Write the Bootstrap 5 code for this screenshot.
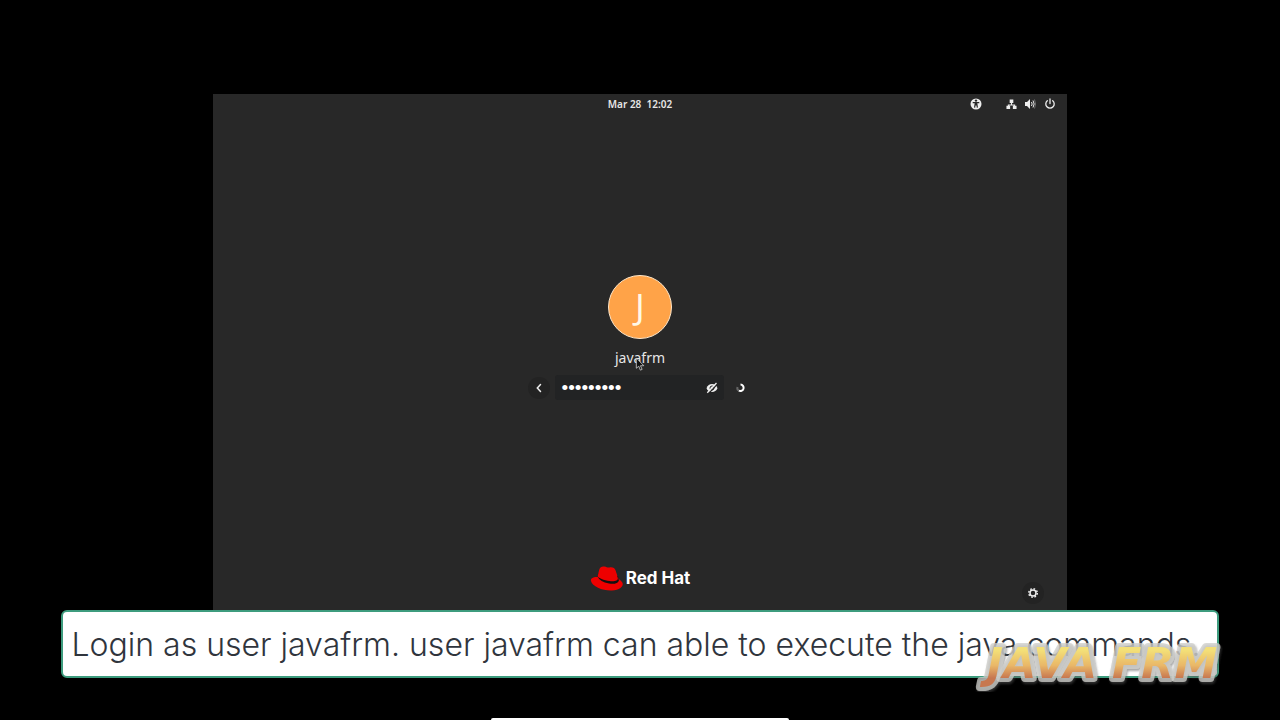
<!DOCTYPE html>
<html lang="en">
<head>
<meta charset="utf-8">
<meta name="viewport" content="width=device-width, initial-scale=1">
<title>Login</title>
<link href="https://cdn.jsdelivr.net/npm/bootstrap@5.3.0/dist/css/bootstrap.min.css" rel="stylesheet">
<style>
  body { background: #000; font-family: "Noto Sans", sans-serif; }
  .stage { min-height: 100vh; padding-top: 94px; }
  .screen { width: 66.66%; background: #282828; color: #e6e6e6; }
  .topbar { height: 20px; font-size: 10px; line-height: 20px; font-weight: 600; padding: 0 11px; }
  .topbar > * { flex: 1 1 0; }
  .topbar time { white-space: pre; }
  .icon-btn { border: 0; padding: 0; background: none; color: #eee; display: flex; align-items: center; justify-content: center; }
  .round-btn { width: 22px; height: 22px; border-radius: 50%; background: #232323; }
  .avatar { width: 64px; height: 64px; border-radius: 50%; background: #ffa348; border: 1px solid #ffe6c8; color: #fff8e6; font-size: 34px; line-height: 60px; }
  .user-name { font-size: 14px; line-height: 20px; margin-top: 9px; margin-bottom: 7px; }
  .login-row { gap: 5px; }
  .pass-box { width: 169px; height: 25px; background: #222324; border-radius: 3px; padding: 0 6px; }
  .pass-box input { min-width: 0; height: 21px; border: 0; outline: 0; padding: 0; background: none; color: #fff; font: 19px "Liberation Sans", sans-serif; }
  .pointer { left: 20px; top: 9px; }
  .shelf { height: 49px; padding: 0 23px 6px; }
  .shelf > * { flex: 1 1 0; }
  .brand-name { font: 700 17px "Inter", sans-serif; line-height: 26px; color: #fff; }
  .caption-box { width: 90.4%; background: #fff; border: 2px solid #3d9c7e; border-radius: 6px; padding: 2px 8px 0; margin-bottom: 40px; font: 300 32px "Inter", sans-serif; line-height: 62px; color: #30353d; }
  .watermark { right: -16px; bottom: -16px; }
  .watermark text { font: italic 700 43px "DejaVu Sans", sans-serif; fill: url(#gold); stroke: rgba(205, 205, 202, .75); stroke-width: 8px; stroke-linejoin: round; paint-order: stroke; }
  .home-bar { width: 298px; height: 2px; background: #fff; border-radius: 3px 3px 0 0; }
</style>
</head>
<body>
<div class="stage d-flex flex-column align-items-center">
  <main class="screen d-flex flex-column flex-grow-1">
    <header class="topbar d-flex align-items-center">
      <span></span>
      <time class="text-center">Mar 28  12:02</time>
      <div class="d-flex justify-content-end align-items-center">
        <button class="icon-btn me-4" aria-label="Accessibility"><svg width="12" height="12" viewBox="0 0 12 12"><circle cx="6" cy="6" r="5.5" fill="currentColor"/><circle cx="6" cy="2.6" r="1.2" fill="#282828"/><path d="M2.7 4.7h6.6M6 4.5v3M4.6 9.6 5.3 5h1.4l.7 4.6" fill="none" stroke="#282828" stroke-width="1.2"/></svg></button>
        <button class="icon-btn me-2" aria-label="Network"><svg width="11" height="12" viewBox="0 0 12 12" fill="currentColor"><path d="M4 1h4v4H6.6v1.500H10V8h1.500v3.500h-4V8h1.300v-.4H3.200V8h1.300v3.500h-4V8H2V6.500h3.400V5H4z"/></svg></button>
        <button class="icon-btn me-2" aria-label="Volume"><svg width="11" height="12" viewBox="0 0 11 12"><path d="M0 4h2l3-3v10L2 8H0z" fill="currentColor"/><path d="M6.500 4q1.300 2 0 4M8 2.500q2.300 3.500 0 7" fill="none" stroke="currentColor"/><path d="M9.500 1.500q2.300 4.500 0 9" fill="none" stroke="#888" stroke-width=".7"/></svg></button>
        <button class="icon-btn" aria-label="Power"><svg width="12" height="12" viewBox="0 0 12 12" fill="none" stroke="currentColor" stroke-width="1.300" stroke-linecap="round"><path d="M3.300 2.700a4.200 4.200 0 1 0 5.400 0M6 1v4.500"/></svg></button>
      </div>
    </header>

    <form class="flex-grow-1 d-flex flex-column align-items-center justify-content-center" onsubmit="return false">
      <div class="avatar text-center">J</div>
      <label for="password" class="user-name position-relative">javafrm
        <svg class="pointer pe-none position-absolute" width="12" height="15" viewBox="0 0 12 16"><path d="M1 1v11l2.600-2.200L5.300 14l1.900-.8-1.800-3.900H9z" fill="#111" stroke="#ddd" stroke-width=".8"/></svg>
      </label>
      <div class="login-row d-flex align-items-center">
        <button type="button" class="icon-btn round-btn" aria-label="Back"><svg width="9" height="12" viewBox="0 0 9 12" fill="none" stroke="currentColor" stroke-width="1.500" stroke-linecap="round"><path d="M5.500 2.500 2.300 6l3.200 3.500"/></svg></button>
        <div class="pass-box d-flex align-items-center">
          <input id="password" type="password" class="flex-grow-1" value="aaaaaaaaa">
          <button type="button" class="icon-btn" aria-label="Show password"><svg width="12" height="12" viewBox="0 0 12 12"><path d="M.5 6.200Q2.200 2 6 2t5.500 4.200Q9.800 10 6 10T.5 6.200z" fill="currentColor"/><circle cx="6" cy="6" r="2" fill="none" stroke="#222" stroke-width="1"/><path d="M2.500 11.500 11.500 2" stroke="#222" stroke-width="1.200"/><path d="M1.300 10.800 10.500 1" stroke="currentColor" stroke-width="1.300"/></svg></button>
        </div>
        <span class="round-btn icon-btn bg-transparent" role="status" aria-label="Signing in"><svg width="12" height="12" viewBox="0 0 12 12" fill="none" stroke-width="2"><path d="M6.500 2.600a3.200 3.200 0 1 1-1.800 5.900" stroke="#fff"/><path d="M4.700 8.500A3 3 0 0 1 3.500 5" stroke="#666"/></svg></span>
      </div>
    </form>

    <footer class="shelf d-flex">
      <span></span>
      <div class="d-flex justify-content-center align-items-start pt-1">
        <svg class="flex-shrink-0" width="36" height="27" viewBox="0 0 36 27"><path d="M7.500 12C2 12 .5 14 1 16c1.300 5.500 12 10 21 9.500 7-.3 12-4 10.500-7.500-.6-1.500-2-2.800-3.700-4L26 8z" fill="#e00"/><path d="M7.500 11.500Q10 17 19 18.500c5 .8 9.500 0 9.800-3.300L28 11 8.500 8z" fill="#111"/><path d="M7.600 11.200 9.300 4.500C10 2 12 1 14.500 1.500c2 .4 3 1.300 5 1 3-.5 5.300.4 6.300 3.500l2 7c.6 2.600-3.600 3.700-8.200 3-5.500-.7-11.600-3.200-12-4.800z" fill="#e00"/></svg>
        <span class="brand-name text-nowrap">Red Hat</span>
      </div>
      <div class="d-flex justify-content-end align-items-end">
        <button class="icon-btn round-btn" aria-label="Session settings"><svg width="12" height="12" viewBox="0 0 12 12" fill="none" stroke="currentColor"><circle cx="6" cy="6" r="3" stroke-width="1.500"/><circle cx="6" cy="6" r="4.300" stroke-width="1.400" stroke-dasharray="1.690 1.690"/></svg></button>
      </div>
    </footer>
  </main>

  <div class="caption-box position-relative text-nowrap">Login as user javafrm. user javafrm can able to execute the java commands.
    <svg class="watermark position-absolute" width="260" height="54" viewBox="0 0 260 54">
      <defs>
        <linearGradient id="gold" x1="0" y1="0" x2="0" y2="1"><stop offset=".25" stop-color="#f3df77"/><stop offset=".55" stop-color="#e9b768"/><stop offset=".8" stop-color="#c77750"/></linearGradient>
        <filter id="bevel" x="-10%" y="-20%" width="120%" height="140%"><feDropShadow dx="1" dy="2" stdDeviation="1" flood-color="#555" flood-opacity=".7"/></filter>
      </defs>
      <text x="14" y="40" filter="url(#bevel)">JAVA FRM</text>
    </svg>
  </div>
  <div class="home-bar"></div>
</div>
<script src="https://cdn.jsdelivr.net/npm/bootstrap@5.3.0/dist/js/bootstrap.bundle.min.js"></script>
</body>
</html>
